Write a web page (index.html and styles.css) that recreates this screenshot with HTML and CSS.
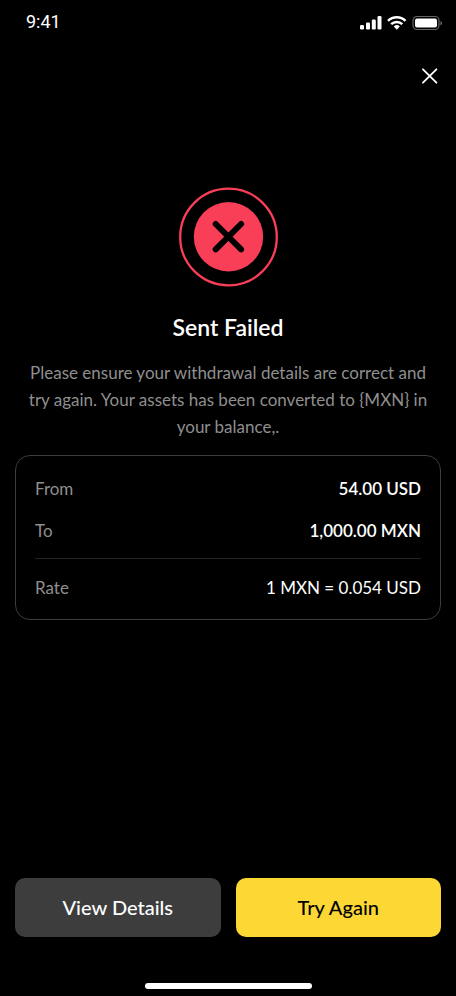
FILE: index.html
```html
<!DOCTYPE html>
<html lang="en">
<head>
<meta charset="utf-8">
<meta name="viewport" content="width=device-width, initial-scale=1">
<title>Sent Failed</title>
<link rel="stylesheet" href="styles.css">
</head>
<body>
<div class="screen">
  <div class="status-bar">
    <span class="time">9:41</span>
    <svg class="status-icons" width="84" height="16" viewBox="0 0 84 16" aria-hidden="true">
      <g fill="#fff">
        <rect x="1" y="11" width="4" height="4.500" rx="1.200"/>
        <rect x="7" y="8.500" width="4" height="7" rx="1.200"/>
        <rect x="12.800" y="5.500" width="4" height="10" rx="1.200"/>
        <rect x="18.500" y="2" width="4" height="13.500" rx="1.200"/>
      </g>
      <g fill="none" stroke="#fff" stroke-width="2.500">
        <path d="M29 6.900a12.500 12.500 0 0 1 17.500 0"/>
        <path d="M32.200 10.200a8 8 0 0 1 11.100 0"/>
      </g>
      <path d="M34.800 12.400a4.600 4.600 0 0 1 6 0L37.800 15.700z" fill="#fff"/>
      <rect x="54" y="2.500" width="26" height="13" rx="4" fill="none" stroke="#fff" stroke-opacity=".4" stroke-width="1.200"/>
      <rect x="56" y="4.500" width="22" height="9" rx="2" fill="#fff"/>
      <path d="M81.500 7v4.500q1.500-.7 1.500-2.250T81.500 7z" fill="#fff" fill-opacity=".45"/>
    </svg>
  </div>
  <header class="top-bar">
    <button class="close" type="button" aria-label="Close">
      <svg width="16" height="16" viewBox="0 0 16 16" aria-hidden="true"><path d="M1 1.300l13.400 13.400M14.400 1.300L1 14.700" stroke="#fff" stroke-width="1.800" stroke-linecap="round"/></svg>
    </button>
  </header>
  <main class="content">
    <svg class="failed-icon" width="100" height="100" viewBox="0 0 100 100" aria-hidden="true">
      <circle cx="50.500" cy="50" r="48.300" fill="none" stroke="#f93e58" stroke-width="2.300"/>
      <circle cx="50.500" cy="49.700" r="34.700" fill="#f93e58"/>
      <path d="M37.700 37l25.400 25.400M63.100 37L37.700 62.400" stroke="#000" stroke-width="6" stroke-linecap="round"/>
    </svg>
    <h1 class="title">Sent Failed</h1>
    <p class="message">Please ensure your withdrawal details are correct and try again. Your assets has been converted to {MXN} in your balance,.</p>
    <dl class="summary">
      <div class="row"><dt>From</dt><dd class="amount">54.00 USD</dd></div>
      <div class="row"><dt>To</dt><dd class="amount">1,000.00 MXN</dd></div>
      <div class="row rate"><dt>Rate</dt><dd>1 MXN = 0.054 USD</dd></div>
    </dl>
  </main>
  <footer class="actions">
    <button class="button secondary" type="button">View Details</button>
    <button class="button primary" type="button">Try Again</button>
  </footer>
  <div class="home-indicator"></div>
</div>
</body>
</html>
```
FILE: styles.css
```css
* {
  box-sizing: border-box;
}

body {
  margin: 0;
  background: #000;
  color: #fff;
  font-family: Lato, sans-serif;
  font-size: 17px;
}

.screen {
  display: flex;
  flex-direction: column;
  min-height: 100vh;
}

.status-bar {
  display: flex;
  justify-content: space-between;
  align-items: center;
  height: 43px;
  padding: 0 13px 0 26px;
}

.time {
  font-family: Roboto, sans-serif;
  font-size: 18px;
}

.top-bar {
  display: flex;
  justify-content: flex-end;
  padding: 17px 10px 16px;
}

.close {
  display: flex;
  padding: 8px;
  border: 0;
  background: none;
  cursor: pointer;
}

.content {
  display: flex;
  flex: 1;
  flex-direction: column;
  align-items: center;
  padding: 79px 15px 16px;
}

.title {
  margin: 26px 0 18px;
  font-size: 23px;
  font-weight: 600;
  line-height: 28px;
}

.message {
  margin: 0 0 15px;
  padding: 0 8px;
  color: #8f8f8f;
  line-height: 27px;
  text-align: center;
}

.summary {
  align-self: stretch;
  margin: 0;
  padding: 20px 19px 18px;
  border: 1px solid #3d3d3d;
  border-radius: 15px;
}

.row {
  display: flex;
  justify-content: space-between;
  line-height: 26px;
}

.row + .row {
  margin-top: 16px;
}

.row.rate {
  padding-top: 16px;
  margin-top: 14px;
  border-top: 1px solid #242424;
}

dt {
  color: #8f8f8f;
}

dd {
  margin: 0;
}

.amount {
  font-weight: 600;
}

.actions {
  display: flex;
  gap: 15px;
  padding: 0 15px;
}

.button {
  flex: 1;
  height: 59px;
  padding: 0 0 2px;
  border: 0;
  border-radius: 10px;
  font: 500 20px Lato, sans-serif;
  cursor: pointer;
}

.secondary {
  background: #3d3d3d;
  color: #fff;
}

.primary {
  background: #fdd835;
  color: #000;
}

.home-indicator {
  align-self: center;
  width: 167px;
  height: 6px;
  margin: 46px 0 7px;
  border-radius: 3px;
  background: #fff;
}
```
